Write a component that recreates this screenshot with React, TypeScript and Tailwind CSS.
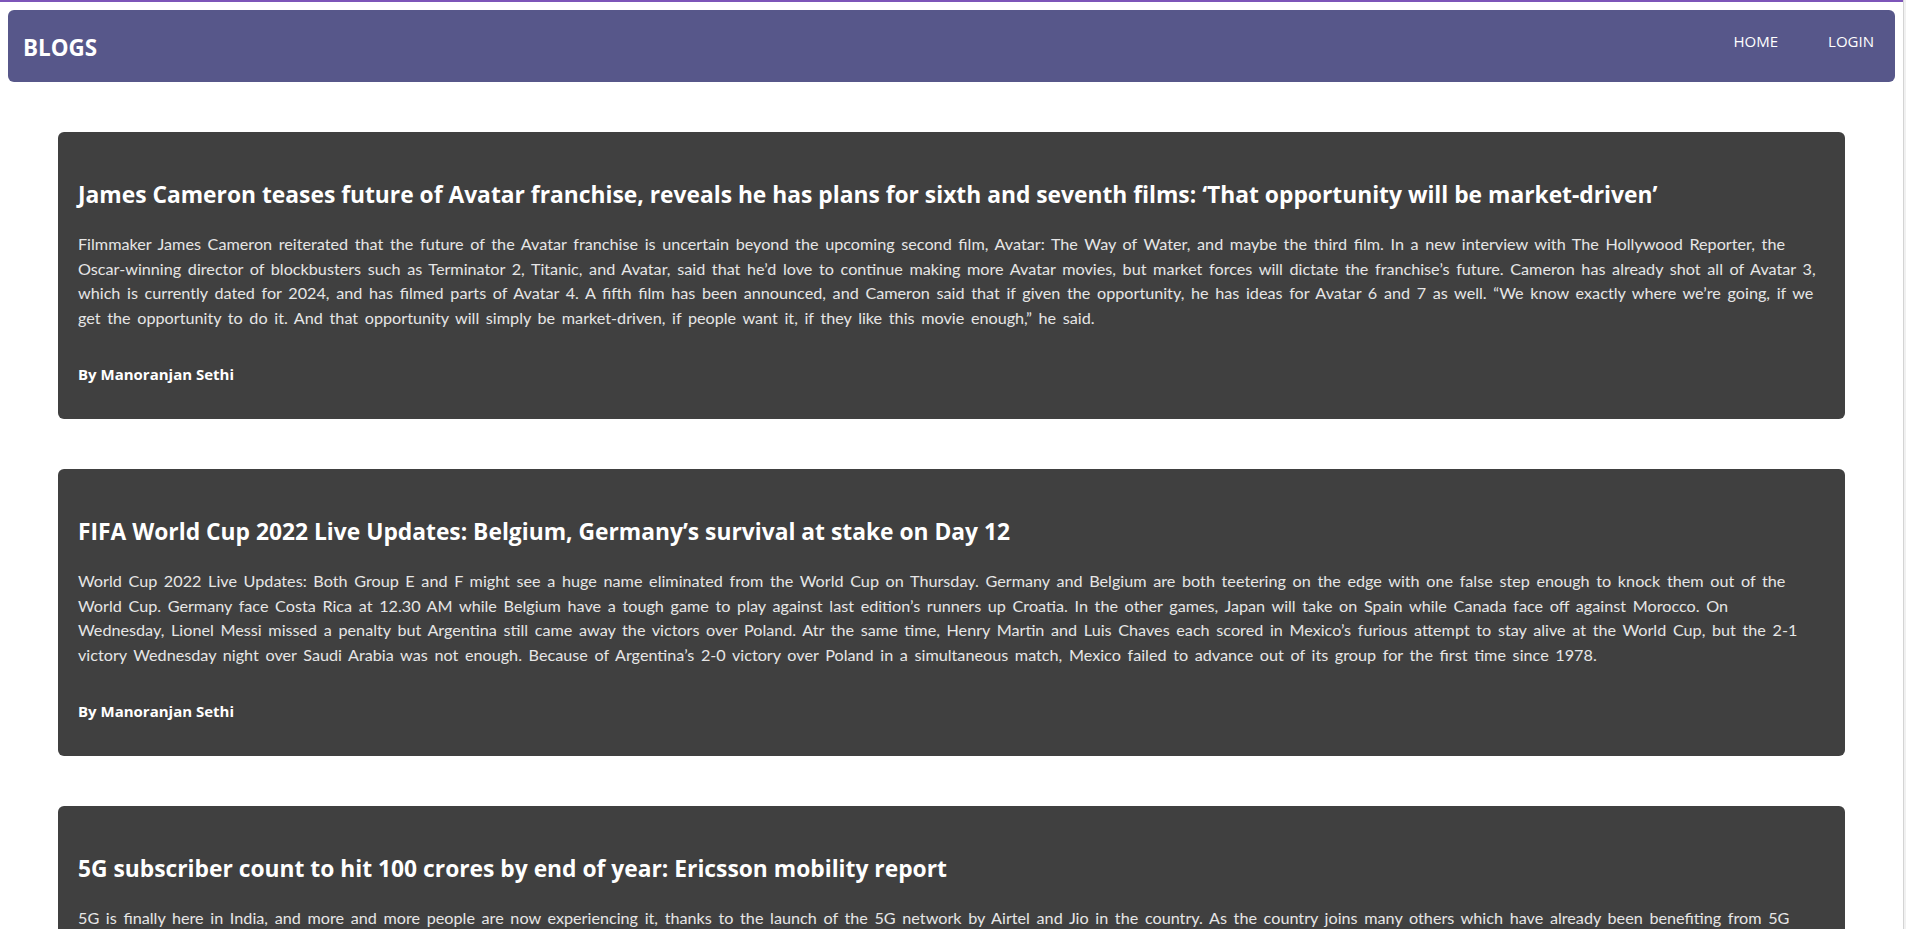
import React from 'react';

type Post = {
  id: number;
  title: string;
  body: string;
  author: string;
};

const posts: Post[] = [
  {
    id: 1,
    title:
      'James Cameron teases future of Avatar franchise, reveals he has plans for sixth and seventh films: ‘That opportunity will be market-driven’',
    body:
      'Filmmaker James Cameron reiterated that the future of the Avatar franchise is uncertain beyond the upcoming second film, Avatar: The Way of Water, and maybe the third film. In a new interview with The Hollywood Reporter, the Oscar-winning director of blockbusters such as Terminator 2, Titanic, and Avatar, said that he’d love to continue making more Avatar movies, but market forces will dictate the franchise’s future. Cameron has already shot all of Avatar 3, which is currently dated for 2024, and has filmed parts of Avatar 4. A fifth film has been announced, and Cameron said that if given the opportunity, he has ideas for Avatar 6 and 7 as well. “We know exactly where we’re going, if we get the opportunity to do it. And that opportunity will simply be market-driven, if people want it, if they like this movie enough,” he said.',
    author: 'Manoranjan Sethi',
  },
  {
    id: 2,
    title: 'FIFA World Cup 2022 Live Updates: Belgium, Germany’s survival at stake on Day 12',
    body:
      'World Cup 2022 Live Updates: Both Group E and F might see a huge name eliminated from the World Cup on Thursday. Germany and Belgium are both teetering on the edge with one false step enough to knock them out of the World Cup. Germany face Costa Rica at 12.30 AM while Belgium have a tough game to play against last edition’s runners up Croatia. In the other games, Japan will take on Spain while Canada face off against Morocco. On Wednesday, Lionel Messi missed a penalty but Argentina still came away the victors over Poland. Atr the same time, Henry Martin and Luis Chaves each scored in Mexico’s furious attempt to stay alive at the World Cup, but the 2-1 victory Wednesday night over Saudi Arabia was not enough. Because of Argentina’s 2-0 victory over Poland in a simultaneous match, Mexico failed to advance out of its group for the first time since 1978.',
    author: 'Manoranjan Sethi',
  },
  {
    id: 3,
    title: '5G subscriber count to hit 100 crores by end of year: Ericsson mobility report',
    body:
      '5G is finally here in India, and more and more people are now experiencing it, thanks to the launch of the 5G network by Airtel and Jio in the country. As the country joins many others which have already been benefiting from 5G services, the number of 5G subscribers across the world is expected to cross 100 crores by the end of this year, according to the latest Ericsson Mobility Report.',
    author: 'Manoranjan Sethi',
  },
];

const Navbar = () => (
  <nav className="h-[72px] rounded-[6px] bg-[#57578a] flex items-center justify-between pl-[15px] pr-[21px]">
    <a href="#" className="mt-[4px] text-white font-bold text-[22.4px] leading-[30px] [font-family:'Open_Sans',sans-serif]">
      BLOGS
    </a>
    <ul className="flex items-center gap-[50px] mb-[11px] text-white text-[15px] leading-[20px] [font-family:'Open_Sans',sans-serif]">
      <li>
        <a href="#">HOME</a>
      </li>
      <li>
        <a href="#">LOGIN</a>
      </li>
    </ul>
  </nav>
);

const BlogCard = ({ post }: { post: Post }) => (
  <div className="mx-[50px] rounded-md bg-[#404040] pl-[20px] pr-[26px] pt-[47px] pb-[35px]">
    <h2 className="text-white font-bold text-[22.8px] leading-[31px] [font-family:'Open_Sans',sans-serif]">
      {post.title}
    </h2>
    <p className="mt-[22px] text-[#e6e6e6] text-[16.2px] leading-[24.5px] [word-spacing:2.5px] [font-family:Lato,sans-serif]">
      {post.body}
    </p>
    <div className="mt-[34px] text-white font-bold text-[15px] leading-[20px] [font-family:'Open_Sans',sans-serif]">
      By {post.author}
    </div>
  </div>
);

export default function App() {
  return (
    <div className="h-screen overflow-hidden flex bg-white">
      <div className="flex-1 min-w-0 flex flex-col">
        <div className="h-[2px] bg-[#7d55b9] shrink-0" />
        <div className="p-2">
          <Navbar />
          <div className="mt-[50px] flex flex-col gap-[50px]">
            {posts.map((p) => (
              <BlogCard key={p.id} post={p} />
            ))}
          </div>
        </div>
      </div>
      <div className="w-[3px] shrink-0 border-l border-[#d4d4d4] bg-[#f1f1f1]" />
    </div>
  );
}
